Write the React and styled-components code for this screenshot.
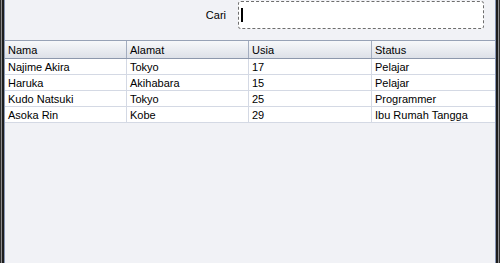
import React from 'react';
import styled, { createGlobalStyle } from 'styled-components'

const Global = createGlobalStyle`
  html, body {
    margin: 0;
    padding: 0;
    background: #f1f2f6;
  }
  body {
    font-family: "Liberation Sans", Tahoma, sans-serif;
    font-size: 11px;
    color: #000;
  }
`

const columns = ['Nama', 'Alamat', 'Usia', 'Status']
const rows = [
  ['Najime Akira', 'Tokyo', '17', 'Pelajar'],
  ['Haruka', 'Akihabara', '15', 'Pelajar'],
  ['Kudo Natsuki', 'Tokyo', '25', 'Programmer'],
  ['Asoka Rin', 'Kobe', '29', 'Ibu Rumah Tangga'],
]

export default function App() {
  return (
    <>
      <Global />
      <Frame>
        <SearchBar>
          <Label>Cari</Label>
          <Field>
            <Caret />
          </Field>
        </SearchBar>
        <Table>
          <Row header>
            {columns.map(c => <Cell key={c} header>{c}</Cell>)}
          </Row>
          {rows.map(r => (
            <Row key={r[0]}>
              {r.map((v, i) => <Cell key={i}>{v}</Cell>)}
            </Row>
          ))}
        </Table>
      </Frame>
    </>
  );
}

const Frame = styled.div`
  width: 500px;
  height: 263px;
  box-sizing: border-box;
  padding: 0 5px;
  display: flex;
  flex-direction: column;
  background: #f1f2f6;
  box-shadow:
    inset 1px 0 0 #2f2f2f,
    inset 2px 0 0 #8e8e8e,
    inset 4px 0 0 #1e1e1e,
    inset 5px 0 0 #8796b4,
    inset -1px 0 0 #2f2f2f,
    inset -2px 0 0 #8e8e8e,
    inset -4px 0 0 #1e1e1e,
    inset -5px 0 0 #8796b4;
`

const SearchBar = styled.div`
  height: 40px;
  display: flex;
  justify-content: flex-end;
  align-items: flex-start;
  gap: 12px;
  padding: 1px 11px 0 0;
  box-sizing: border-box;
`

const Label = styled.span`
  line-height: 28px;
`

const Field = styled.div`
  width: 246px;
  height: 28px;
  box-sizing: border-box;
  border: 1px dashed #6e6e6e;
  border-radius: 3px;
  background: #fff;
  display: flex;
  align-items: center;
  padding-left: 2px;
`

const Caret = styled.span`
  width: 2px;
  height: 14px;
  background: #000;
`

const Table = styled.div`
  display: flex;
  flex-direction: column;
  border-top: 1px solid #97a2b6;
`

const Row = styled.div`
  display: grid;
  grid-template-columns: 122px 122px 123px 1fr;
  height: ${p => p.header ? '18px' : '16px'};
  background: ${p => p.header ? 'linear-gradient(#f7f8fa, #dde1e8)' : '#fff'};
  border-bottom: 1px solid ${p => p.header ? '#8d98ac' : '#d4d9e4'};
  box-sizing: border-box;
`

const Cell = styled.div`
  padding: 1px 0 0 3px;
  line-height: ${p => p.header ? '16px' : '14px'};
  white-space: nowrap;
  overflow: hidden;
  border-right: 1px solid ${p => p.header ? '#a3adbf' : '#d4d9e4'};
  &:last-child {
    border-right: none;
  }
`
